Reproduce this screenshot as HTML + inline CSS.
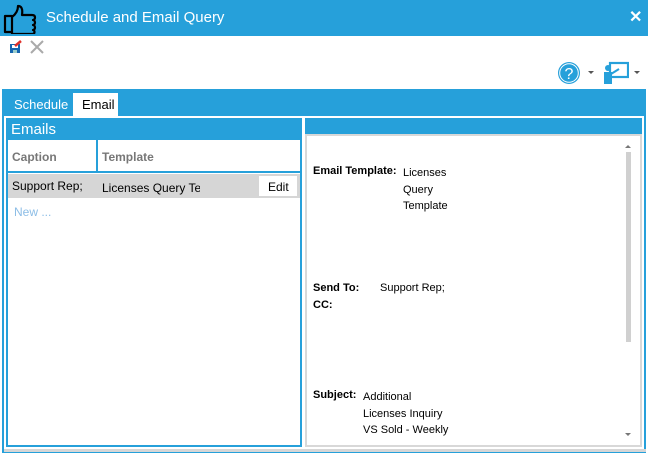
<!DOCTYPE html><html><head><style>
*{margin:0;padding:0;box-sizing:border-box}
body{width:648px;height:454px;position:relative;background:#fff;font-family:"Segoe UI","Liberation Sans",sans-serif;overflow:hidden}
.a{position:absolute}
.t{font-size:12px;color:#000;white-space:nowrap}
b{font-weight:bold}
</style></head><body>
<div class="a" style="left:0;top:0;width:648px;height:36px;background:#26a0da"></div>
<svg class="a" style="left:3px;top:4px" width="34" height="30" viewBox="0 0 34 30"><path d="M2 12h7v16H2z M9 13 C13 10 15 6 15 2 c3 0 5 2 4 9 h10 c2 0 3 1 3 2.5 c0 1.5-1 2.5-2 2.5 c1 0 2 1 2 2.5 c0 1.5-1 2.5-2 2.5 c1 0 2 1 2 2.5 s-1 2.5-2 2.5 c1 0 1.5 1 1.5 2 c0 1.5-1 2-2 2 H9z" fill="#26a0da" stroke="#000" stroke-width="2.2" stroke-linejoin="round"/></svg>
<div class="a" style="left:46px;top:9px;font-size:15px;color:#fff">Schedule and Email Query</div>
<div class="a" style="left:629px;top:7px;font-size:16px;color:#fff;font-weight:bold">✕</div>
<svg class="a" style="left:9px;top:40px" width="14" height="14"><rect x="1" y="4" width="10" height="9" fill="#1565b0"/><rect x="3" y="5" width="6" height="3" fill="#fff"/><rect x="4" y="10" width="4" height="3" fill="#9cc"/><path d="M6 6 L12 1" stroke="#e0302a" stroke-width="2.5"/></svg>
<svg class="a" style="left:30px;top:40px" width="14" height="14"><path d="M1 1L13 13M13 1L1 13" stroke="#aaa" stroke-width="2"/></svg>
<svg class="a" style="left:557px;top:61px" width="24" height="24"><circle cx="12" cy="12" r="11" fill="#26a0da"/><circle cx="12" cy="12" r="9.3" fill="none" stroke="#fff" stroke-width="1"/><text x="12" y="18" text-anchor="middle" font-size="16" fill="#fff" font-family="Liberation Sans">?</text></svg>
<div class="a" style="left:588px;top:71px;border:3px solid transparent;border-top:3px solid #555"></div>
<svg class="a" style="left:603px;top:61px" width="26" height="24"><rect x="7" y="2" width="18" height="14" fill="none" stroke="#26a0da" stroke-width="2.2"/><circle cx="5" cy="7" r="3" fill="#26a0da"/><rect x="1" y="11" width="8" height="12" fill="#26a0da"/><path d="M8 13 L16 8" stroke="#26a0da" stroke-width="2"/></svg>
<div class="a" style="left:634px;top:71px;border:3px solid transparent;border-top:3px solid #555"></div>
<div class="a" style="left:2px;top:89px;width:644px;height:364px;background:#26a0da"></div>
<div class="a" style="left:4px;top:116px;width:640px;height:334px;background:#fff"></div>
<div class="a" style="left:4px;top:449px;width:642px;height:3px;background:#d6d6d6"></div>
<div class="a" style="left:73px;top:93px;width:45px;height:24px;background:#fff"></div>
<div class="a t" style="left:14px;top:97px;color:#fff;font-size:13px">Schedule</div>
<div class="a t" style="left:82px;top:97px;font-size:13px">Email</div>
<div class="a" style="left:6px;top:118px;width:296px;height:329px;border:2px solid #26a0da;background:#fff"></div>
<div class="a" style="left:6px;top:118px;width:296px;height:22px;background:#26a0da"></div>
<div class="a t" style="left:11px;top:121px;color:#fff;font-size:15px">Emails</div>
<div class="a" style="left:96px;top:140px;width:2px;height:32px;background:#26a0da"></div>
<div class="a" style="left:6px;top:171px;width:296px;height:2px;background:#26a0da"></div>
<div class="a t" style="left:12px;top:150px;color:#777;font-weight:bold">Caption</div>
<div class="a t" style="left:102px;top:150px;color:#777;font-weight:bold">Template</div>
<div class="a" style="left:8px;top:174px;width:292px;height:24px;background:#d6d6d6"></div>
<div class="a t" style="left:12px;top:179px">Support Rep;</div>
<div class="a t" style="left:102px;top:181px;width:98px;overflow:hidden">Licenses Query Template</div>
<div class="a" style="left:259px;top:176px;width:38px;height:20px;background:#fff"></div>
<div class="a t" style="left:268px;top:180px">Edit</div>
<div class="a t" style="left:14px;top:205px;color:#8cbde6">New ...</div>
<div class="a" style="left:305px;top:118px;width:337px;height:329px;border:2px solid #d8d8d8;border-top:none;background:#fff"></div>
<div class="a" style="left:305px;top:118px;width:337px;height:16px;background:#26a0da"></div>
<div class="a" style="left:305px;top:134px;width:337px;height:2px;background:#d8d8d8"></div>
<div class="a" style="left:626px;top:152px;width:5px;height:190px;background:#d0d0d0"></div>
<div class="a" style="left:625px;top:142px;border:3px solid transparent;border-bottom:3px solid #777"></div>
<div class="a" style="left:625px;top:433px;border:3px solid transparent;border-top:3px solid #777"></div>
<div class="a t" style="left:313px;top:165px;font-size:11px"><b>Email Template:</b></div>
<div class="a t" style="left:403px;top:165px;font-size:11px;line-height:16.5px">Licenses<br>Query<br>Template</div>
<div class="a t" style="left:313px;top:282px;font-size:11px"><b>Send To:</b></div>
<div class="a t" style="left:380px;top:282px;font-size:11px">Support Rep;</div>
<div class="a t" style="left:313px;top:299px;font-size:11px"><b>CC:</b></div>
<div class="a t" style="left:313px;top:389px;font-size:11px"><b>Subject:</b></div>
<div class="a t" style="left:363px;top:389px;font-size:11px;line-height:16.5px">Additional<br>Licenses Inquiry<br>VS Sold - Weekly</div>
</body></html>
